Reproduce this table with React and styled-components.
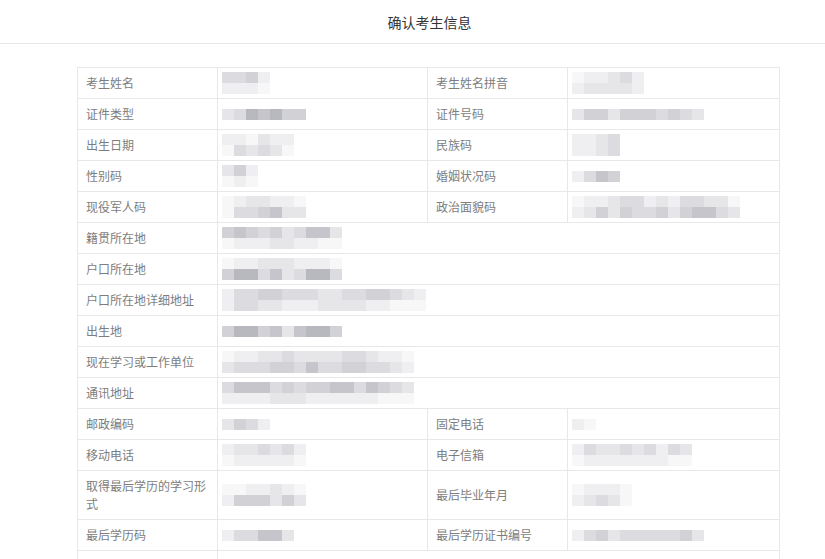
import React from "react";
import styled, { createGlobalStyle } from "styled-components";

const GlobalStyle = createGlobalStyle`
  html, body {
    margin: 0;
    padding: 0;
    background: #fff;
    overflow: hidden;
  }
  body {
    font-family: "Noto Sans CJK SC", "Noto Sans", sans-serif;
  }
`;

const Header = styled.div`
  height: 43px;
  border-bottom: 1px solid #e6e6e6;
  padding-left: 34px;
  display: flex;
  align-items: center;
  justify-content: center;
  font-size: 14px;
  color: #333;
`;

const Content = styled.div`
  padding: 23px 46px 0 77px;
`;

const Table = styled.table`
  width: 702px;
  border-collapse: collapse;
  table-layout: fixed;
  font-size: 12px;
  line-height: 18px;
`;

const Label = styled.td`
  border: 1px solid #e8e8e8;
  padding: 6px 8px;
  color: #7d7d7d;
  vertical-align: middle;
`;

const Value = styled.td`
  border: 1px solid #e8e8e8;
  padding: 6px 4px;
  vertical-align: middle;
`;

const MosaicBox = styled.div`
  height: 18px;
  display: flex;
  flex-direction: column;
  justify-content: center;
`;

const MosaicRow = styled.div`
  display: flex;
  height: 11px;
  flex-shrink: 0;
`;

const Cell = styled.span`
  width: 12px;
  height: 11px;
  background: ${(p) => p.$c};
`;

const shades = {
  0: "#f7f7f8",
  1: "#efeff1",
  2: "#e6e6e9",
  3: "#dcdce0",
  4: "#d1d1d6",
  5: "#c5c5cb",
  6: "#b8b8bf",
};

function Mosaic({ rows }) {
  if (!rows) return null;
  return (
    <MosaicBox>
      {rows.map((r, i) => (
        <MosaicRow key={i}>
          {r.split("").map((c, j) => (
            <Cell key={j} $c={shades[c]} />
          ))}
        </MosaicRow>
      ))}
    </MosaicBox>
  );
}

const pairs = [
  ["考生姓名", ["3341", "1110"], "考生姓名拼音", ["011231", "122221"]],
  ["证件类型", ["2365644"], "证件号码", ["24424443432"]],
  ["出生日期", ["110211", "032320"], "民族码", ["1123", "1123"]],
  ["性别码", ["241", "010"], "婚姻状况码", ["1354"]],
  ["现役军人码", ["0122110", "0334522"], "政治面貌码", ["01123312133220", "12424334245532"]],
];

const wide = [
  ["籍贯所在地", ["4543423552", "0111221100"]],
  ["户口所在地", ["0112221110", "4663523663"]],
  ["户口所在地详细地址", ["13344333223344321", "13322111222211000"]],
  ["出生地", ["4664525664"]],
  ["现在学习或工作单位", ["0112232222332110", "2333443533443321"]],
  ["通讯地址", ["3555343445535432", "1111222111111000"]],
];

const pairs2 = [
  ["邮政编码", ["2431"], "固定电话", ["10"]],
  ["移动电话", ["1223231", "0111110"], "电子信箱", ["1322323132", "0111111100"]],
  ["取得最后学历的学习形式", ["0011210", "1444242"], "最后毕业年月", ["01110", "12320"]],
  ["最后学历码", ["133552"], "最后学历证书编号", ["13423333342"]],
];

function PairRow({ row }) {
  const [l1, v1, l2, v2] = row;
  return (
    <tr>
      <Label>{l1}</Label>
      <Value><Mosaic rows={v1} /></Value>
      <Label>{l2}</Label>
      <Value><Mosaic rows={v2} /></Value>
    </tr>
  );
}

export default function App() {
  return (
    <>
      <GlobalStyle />
      <Header>确认考生信息</Header>
      <Content>
        <Table>
          <colgroup>
            <col style={{ width: 140 }} />
            <col style={{ width: 210 }} />
            <col style={{ width: 140 }} />
            <col style={{ width: 212 }} />
          </colgroup>
          <tbody>
            {pairs.map((r) => (
              <PairRow key={r[0]} row={r} />
            ))}
            {wide.map(([l, v]) => (
              <tr key={l}>
                <Label>{l}</Label>
                <Value colSpan={3}><Mosaic rows={v} /></Value>
              </tr>
            ))}
            {pairs2.map((r) => (
              <PairRow key={r[0]} row={r} />
            ))}
            <tr>
              <Label>&nbsp;</Label>
              <Value colSpan={3} />
            </tr>
          </tbody>
        </Table>
      </Content>
    </>
  );
}
